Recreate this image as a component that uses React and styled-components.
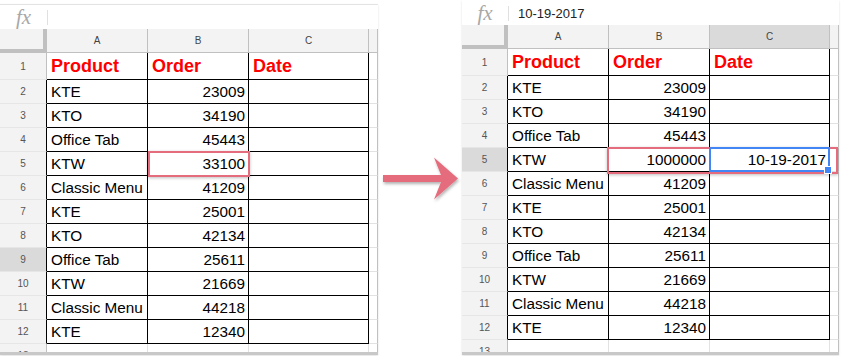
import React from 'react';
import styled, { createGlobalStyle } from 'styled-components';

const GlobalStyle = createGlobalStyle`
  html, body {
    margin: 0;
    padding: 0;
    background: #fff;
  }
`;

const PINK = '#e56c7c';
const GRID_LIGHT = '#e2e2e2';
const HEAD_LINE = '#c0c0c0';

const Page = styled.div`
  display: flex;
  align-items: flex-start;
  width: 841px;
  height: 356px;
  overflow: hidden;
  background: #fff;
  font-family: "Liberation Sans", Arial, sans-serif;
`;

const Panel = styled.div`
  flex-shrink: 0;
  box-sizing: border-box;
  display: flex;
  flex-direction: column;
  width: ${(p) => p.$width}px;
  height: ${(p) => p.$height}px;
  margin-top: ${(p) => p.$top}px;
  overflow: hidden;
  border-top: 1px solid ${(p) => (p.$topLine ? '#e3e3e3' : 'transparent')};
  border-bottom: 3px solid #c8c8c8;
  box-shadow: 0 1px 2px rgba(0, 0, 0, 0.12);
`;

const FormulaBar = styled.div`
  flex-shrink: 0;
  display: flex;
  align-items: center;
  height: 24px;
`;

const Fx = styled.div`
  width: ${(p) => p.$width}px;
  text-align: center;
  font-family: "Liberation Serif", "Times New Roman", serif;
  font-style: italic;
  font-size: 21px;
  line-height: 24px;
  color: #a8a8a8;
`;

const Sep = styled.div`
  width: 1px;
  height: 15px;
  background: #e0e0e0;
`;

const FormulaText = styled.div`
  padding-left: 9px;
  font-size: 13px;
  color: #222;
`;

const Grid = styled.div`
  position: relative;
  display: grid;
  grid-template-columns: ${(p) => p.$rh}px 101px 101px 120px 9px;
  grid-template-rows: 24px 27px repeat(12, 24px);
`;

const Corner = styled.div`
  box-sizing: border-box;
  background: #f3f3f3;
  border-right: 4px solid ${HEAD_LINE};
  border-bottom: 4px solid ${HEAD_LINE};
`;

const ColHead = styled.div`
  box-sizing: border-box;
  display: flex;
  align-items: center;
  justify-content: center;
  background: ${(p) => (p.$active ? '#dadada' : '#f3f3f3')};
  border-right: 1px solid ${HEAD_LINE};
  border-bottom: 1px solid ${HEAD_LINE};
  font-size: 10px;
  color: #444;
`;

const RowHead = styled.div`
  box-sizing: border-box;
  display: flex;
  align-items: center;
  justify-content: center;
  background: ${(p) => (p.$active ? '#dadada' : '#f3f3f3')};
  border-right: 1px solid ${(p) => (p.$dark ? '#000' : HEAD_LINE)};
  border-bottom: 1px solid #e6e6e6;
  font-size: 10px;
  color: #555;
`;

const Cell = styled.div`
  box-sizing: border-box;
  display: flex;
  align-items: center;
  justify-content: ${(p) => (p.$num ? 'flex-end' : 'flex-start')};
  padding: 0 3px 0 4px;
  border-right: 1px solid ${(p) => (p.$dark ? '#000' : GRID_LIGHT)};
  border-bottom: 1px solid ${(p) => (p.$dark ? '#000' : GRID_LIGHT)};
  font-size: ${(p) => (p.$head ? '18px' : '15.3px')};
  font-weight: ${(p) => (p.$head ? 700 : 400)};
  color: ${(p) => (p.$head ? '#ff0000' : '#000')};
  white-space: nowrap;
  overflow: hidden;
`;

const EdgeCell = styled.div`
  box-sizing: border-box;
  background: ${(p) => (p.$header ? '#f3f3f3' : '#fff')};
  border-right: 1px solid ${HEAD_LINE};
  border-bottom: 1px solid ${(p) => (p.$header ? HEAD_LINE : GRID_LIGHT)};
`;

const Highlight = styled.div`
  position: absolute;
  box-sizing: border-box;
  border: 2px solid ${PINK};
  box-shadow: 0 1px 3px rgba(0, 0, 0, 0.25);
  pointer-events: none;
`;

const Selection = styled.div`
  position: absolute;
  box-sizing: border-box;
  border: 2px solid #4285f4;
  pointer-events: none;
`;

const Handle = styled.div`
  position: absolute;
  right: -4px;
  bottom: -4px;
  width: 6px;
  height: 6px;
  background: #4285f4;
  border: 1px solid #fff;
`;

const ArrowWrap = styled.div`
  flex-shrink: 0;
  width: 84px;
  padding-top: 153px;
`;

const baseRows = [
  ['KTE', '23009'],
  ['KTO', '34190'],
  ['Office Tab', '45443'],
  ['KTW', '33100'],
  ['Classic Menu', '41209'],
  ['KTE', '25001'],
  ['KTO', '42134'],
  ['Office Tab', '25611'],
  ['KTW', '21669'],
  ['Classic Menu', '44218'],
  ['KTE', '12340'],
];

const leftRows = baseRows.map(([a, b]) => [a, b, '']);
const rightRows = baseRows.map(([a, b], i) =>
  i === 3 ? [a, '1000000', '10-19-2017'] : [a, b, '']
);

const Sheet = ({ rh, width, height, top, topLine, formula, rows, hoverRow, activeCol, box, selection }) => (
  <Panel $width={width} $height={height} $top={top} $topLine={topLine}>
    <FormulaBar>
      <Fx $width={rh}>fx</Fx>
      <Sep />
      <FormulaText>{formula}</FormulaText>
    </FormulaBar>
    <Grid $rh={rh}>
      <Corner />
      {['A', 'B', 'C'].map((c) => (
        <ColHead key={c} $active={activeCol === c}>{c}</ColHead>
      ))}
      <EdgeCell $header />

      <RowHead>1</RowHead>
      <Cell $dark $head>Product</Cell>
      <Cell $dark $head>Order</Cell>
      <Cell $dark $head>Date</Cell>
      <EdgeCell />

      {rows.map(([a, b, c], i) => (
        <React.Fragment key={i}>
          <RowHead $dark $active={hoverRow === i + 2}>{i + 2}</RowHead>
          <Cell $dark>{a}</Cell>
          <Cell $dark $num>{b}</Cell>
          <Cell $dark $num>{c}</Cell>
          <EdgeCell />
        </React.Fragment>
      ))}

      <RowHead>13</RowHead>
      <Cell />
      <Cell />
      <Cell />
      <EdgeCell />

      <Highlight style={box} />
      {selection && (
        <Selection style={selection}>
          <Handle />
        </Selection>
      )}
    </Grid>
  </Panel>
);

const Arrow = () => (
  <ArrowWrap>
    <svg width="84" height="52" viewBox="0 0 84 52">
      <defs>
        <filter id="arrowShadow" x="-10%" y="-20%" width="130%" height="160%">
          <feDropShadow dx="1" dy="2" stdDeviation="1.4" floodColor="#000" floodOpacity="0.3" />
        </filter>
      </defs>
      <path
        d="M5 22 H63 L56 4.5 L80 25.5 L56 46.5 L63 29 H5 Z"
        fill={PINK}
        filter="url(#arrowShadow)"
      />
    </svg>
  </ArrowWrap>
);

const App = () => (
  <Page>
    <GlobalStyle />
    <Sheet
      rh={47}
      width={378}
      height={351}
      top={4}
      topLine
      formula=""
      rows={leftRows}
      hoverRow={9}
      box={{ left: 148, top: 122, width: 102, height: 26 }}
    />
    <Arrow />
    <Sheet
      rh={46}
      width={377}
      height={355}
      top={0}
      formula="10-19-2017"
      rows={rightRows}
      hoverRow={5}
      activeCol="C"
      box={{ left: 145, top: 122, width: 231, height: 27 }}
      selection={{ left: 247, top: 122, width: 121, height: 25 }}
    />
  </Page>
);

export default App;
